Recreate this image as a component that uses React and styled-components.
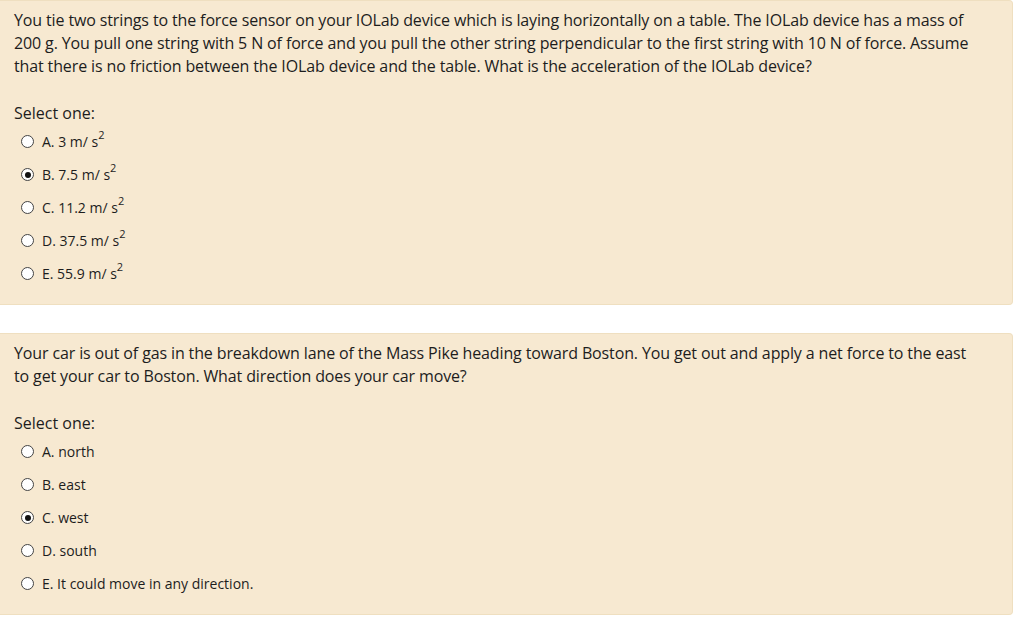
import React from "react";
import styled, { createGlobalStyle } from "styled-components";

const GlobalStyle = createGlobalStyle`
  body {
    margin: 0;
    background: #ffffff;
    font-family: "Open Sans", "Noto Sans", sans-serif;
    color: #1d1d1d;
  }
`;

const Page = styled.div`
  width: 1013px;
  display: flex;
  flex-direction: column;
  gap: 28px;
`;

const Card = styled.div`
  background: #f7e9d1;
  border: 1px solid #efdfc0;
  border-left: none;
  border-radius: 0 4px 4px 0;
  padding: 8px 40px 14px 14px;
`;

const Prompt = styled.p`
  margin: 0;
  font-size: 16px;
  line-height: 23px;
  letter-spacing: -0.13px;
`;

const SelectLabel = styled.div`
  margin-top: 24px;
  font-size: 16px;
  line-height: 23px;
`;

const Options = styled.div`
  display: flex;
  flex-direction: column;
`;

const Option = styled.label`
  display: flex;
  align-items: center;
  height: 33px;
  padding-left: 7px;
  font-size: 14px;
`;

const Radio = styled.span`
  width: 13px;
  height: 13px;
  box-sizing: border-box;
  border-radius: 50%;
  border: 1px solid #444;
  background: #fff;
  margin-right: 8px;
  display: flex;
  align-items: center;
  justify-content: center;
  flex-shrink: 0;
  &::after {
    content: "";
    width: 6px;
    height: 6px;
    border-radius: 50%;
    background: ${(p) => (p.$checked ? "#111" : "transparent")};
  }
`;

const Sup = styled.sup`
  font-size: 11px;
  line-height: 0;
  position: relative;
  top: -2px;
  margin-left: 0;
`;

const Unit = () => (
  <>
    {" m/ s"}
    <Sup>2</Sup>
  </>
);

function Question({ text, options, checked }) {
  return (
    <Card>
      <Prompt>{text}</Prompt>
      <SelectLabel>Select one:</SelectLabel>
      <Options>
        {options.map((o, i) => (
          <Option key={i}>
            <Radio $checked={i === checked} />
            <span>{o}</span>
          </Option>
        ))}
      </Options>
    </Card>
  );
}

export default function App() {
  return (
    <>
      <GlobalStyle />
      <Page>
        <Question
          text="You tie two strings to the force sensor on your IOLab device which is laying horizontally on a table. The IOLab device has a mass of 200 g. You pull one string with 5 N of force and you pull the other string perpendicular to the first string with 10 N of force. Assume that there is no friction between the IOLab device and the table. What is the acceleration of the IOLab device?"
          checked={1}
          options={[
            <>A. 3<Unit /></>,
            <>B. 7.5<Unit /></>,
            <>C. 11.2<Unit /></>,
            <>D. 37.5<Unit /></>,
            <>E. 55.9<Unit /></>,
          ]}
        />
        <Question
          text="Your car is out of gas in the breakdown lane of the Mass Pike heading toward Boston. You get out and apply a net force to the east to get your car to Boston. What direction does your car move?"
          checked={2}
          options={["A. north", "B. east", "C. west", "D. south", "E. It could move in any direction."]}
        />
      </Page>
    </>
  );
}
